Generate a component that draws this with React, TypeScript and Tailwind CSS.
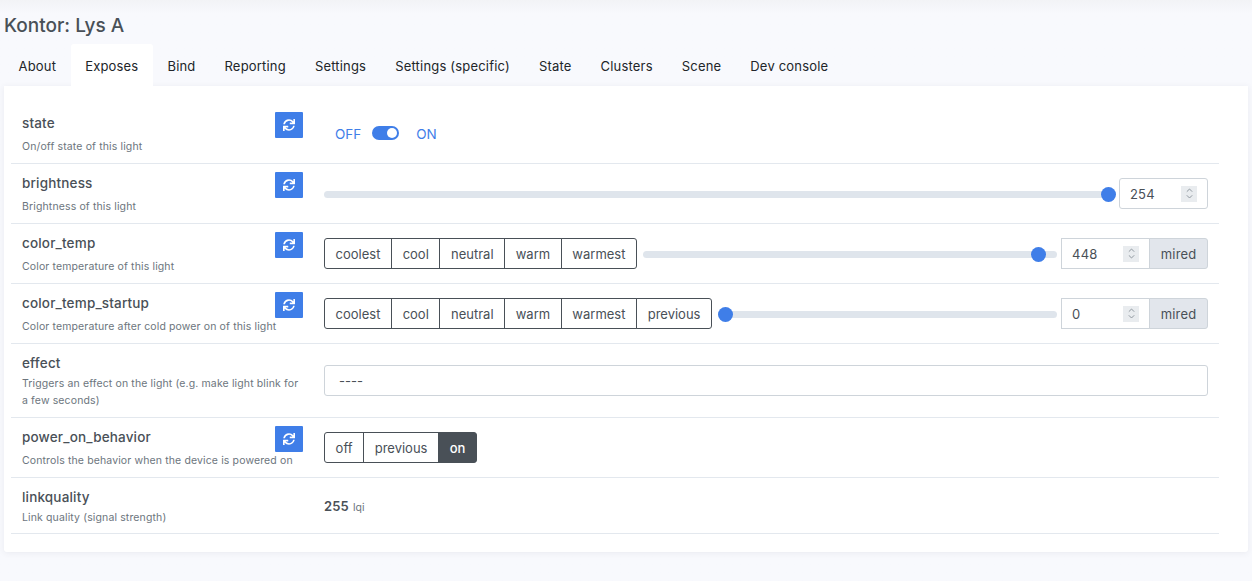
import type { ReactNode } from "react";
import { FaSync } from "react-icons/fa";

const tabs = ["About", "Exposes", "Bind", "Reporting", "Settings", "Settings (specific)", "State", "Clusters", "Scene", "Dev console"];

const RefreshButton = () => (
  <button className="w-[28px] h-[26px] shrink-0 rounded-[1px] bg-[#3f7ee8] text-white flex items-center justify-center">
    <FaSync className="w-[12px] h-[12px]" />
  </button>
);

// left column with the name, description and optional refresh button
const Label = ({ name, desc, descTop = "mt-[5px]", refresh = true }: { name: string; desc: string; descTop?: string; refresh?: boolean }) => (
  <div className="w-[302px] shrink-0 flex justify-between pl-[11px] pr-[21px]">
    <div className="w-[282px] shrink-0">
      <div className="text-[13.5px] tracking-[0.17px] leading-[20px] font-medium text-[#495057] h-[20px] -mt-[1px]">{name}</div>
      <div className={"text-[10.5px] tracking-[0.13px] leading-[17px] text-[#6c757d] " + descTop}>{desc}</div>
    </div>
    {refresh && <div className="-ml-[29px] -mt-[2px]"><RefreshButton /></div>}
  </div>
);

const Slider = ({ percent, className }: { percent: number; className: string }) => (
  <div className={"relative shrink-0 h-[7px] mt-[1px] rounded-full bg-[#dfe5ec] " + className}>
    <div
      className="absolute top-[-4px] w-[15px] h-[15px] rounded-full bg-[#3f7ee8] -ml-[7px]"
      style={{ left: percent + "%" }}
    />
  </div>
);

const Spinner = () => (
  <div className="w-[16px] h-[16px] bg-[#e9ecef] flex flex-col items-center justify-center">
    <svg viewBox="0 0 10 14" className="w-[9px] h-[13px]" fill="none" stroke="#868e96" strokeWidth="1">
      <path d="M2 5 L5 2 L8 5" />
      <path d="M2 9 L5 12 L8 9" />
    </svg>
  </div>
);

const NumberBox = ({ value, className }: { value: string; className: string }) => (
  <div className={"h-[31px] shrink-0 bg-white border border-[#ced4da] flex items-center justify-between pl-[10px] pr-[10px] text-[13px] tracking-[0.15px] text-[#495057] " + className}>
    <span className="pt-[2px]">{value}</span>
    <Spinner />
  </div>
);

const Presets = ({ items, active }: { items: string[]; active?: string }) => (
  <div className="flex h-[31px] shrink-0">
    {items.map((item, i) => (
      <div
        key={item}
        className={
          "h-full px-[10.6px] pt-[2px] flex items-center text-[13px] border border-[#495057] " +
          (i > 0 ? "-ml-px " : "") +
          (i === 0 ? "rounded-l-[3px] " : "") +
          (i === items.length - 1 ? "rounded-r-[3px] " : "") +
          (item === active ? "bg-[#495057] text-white font-medium" : "bg-white text-[#495057]")
        }
      >
        {item}
      </div>
    ))}
  </div>
);

const Unit = () => (
  <div className="h-[31px] w-[59px] shrink-0 -ml-px pt-[2px] rounded-r-[3px] border border-[#ced4da] bg-[#e2e6ec] flex items-center justify-center text-[13px] tracking-[0.15px] text-[#495057]">
    mired
  </div>
);

const Row = ({ height, children }: { height: string; children: ReactNode }) => (
  <div className={"flex border-b border-[#e3e8ee] pt-[10px] " + height}>{children}</div>
);

const temps = ["coolest", "cool", "neutral", "warm", "warmest"];

export default function App() {
  return (
    <div
      className="h-[581px] w-[1252px] overflow-hidden bg-gradient-to-b from-[#f2f3f6] to-[#f8f9fd] to-[14px] text-[#495057]"
      style={{ fontFamily: "Inter, 'Noto Sans', sans-serif" }}
    >
      <h1 className="pl-[4px] pt-[14px] text-[19px] leading-[24px] h-[44px] font-medium text-[#495057]">Kontor: Lys A</h1>
      <div className="flex pl-[4px] h-[42px]">
        {tabs.map((t) => (
          <div
            key={t}
            className={
              "px-[14.5px] pt-[4px] flex items-center text-[13px] tracking-[0.19px] text-[#212529] rounded-t-[3px] " +
              (t === "Exposes" ? "bg-white" : "")
            }
          >
            {t}
          </div>
        ))}
      </div>
      <div className="mx-[4px] h-[466px] bg-white rounded-b-[3px] shadow-[0_1px_6px_rgba(60,70,90,0.08)] pl-[7px] pr-[29px] pt-[18px]">
        <Row height="h-[60px]">
          <Label name="state" desc="On/off state of this light" />
          <div className="flex items-center h-[40px] pl-[22px] gap-[11px] text-[13.5px] text-[#3f7ee8] self-start">
            <span className="mt-[1px]">OFF</span>
            <div className="w-[27px] h-[14px] rounded-full bg-[#3f7ee8] relative -mt-[2px] mr-[6px]">
              <div className="absolute right-[2px] top-[2px] w-[10px] h-[10px] rounded-full bg-white" />
            </div>
            <span className="mt-[1px]">ON</span>
          </div>
        </Row>
        <Row height="h-[60px]">
          <Label name="brightness" desc="Brightness of this light" />
          <div className="flex items-center h-[31px] w-[884px] ml-[11px] mt-[4px] gap-[4px]">
            <Slider percent={99.1} className="w-[791px]" />
            <NumberBox value="254" className="w-[89px] rounded-[3px]" />
          </div>
        </Row>
        <Row height="h-[60px]">
          <Label name="color_temp" desc="Color temperature of this light" />
          <div className="flex items-center h-[31px] w-[884px] ml-[11px] mt-[4px]">
            <Presets items={temps} />
            <Slider percent={95.4} className="w-[414px] ml-[6px] mr-[4px]" />
            <NumberBox value="448" className="w-[89px]" />
            <Unit />
          </div>
        </Row>
        <Row height="h-[60px]">
          <Label name="color_temp_startup" desc="Color temperature after cold power on of this light" />
          <div className="flex items-center h-[31px] w-[884px] ml-[11px] mt-[4px]">
            <Presets items={[...temps, "previous"]} />
            <Slider percent={2.2} className="w-[339px] ml-[6px] mr-[4px]" />
            <NumberBox value="0" className="w-[89px]" />
            <Unit />
          </div>
        </Row>
        <Row height="h-[74px]">
          <Label name="effect" desc="Triggers an effect on the light (e.g. make light blink for a few seconds)" descTop="mt-[2px]" refresh={false} />
          <div className="h-[31px] w-[884px] ml-[11px] mt-[11px] pt-[2px] rounded-[3px] border border-[#ced4da] bg-white flex items-center pl-[14px] text-[13px] text-[#495057]">
            ----
          </div>
        </Row>
        <Row height="h-[60px]">
          <Label name="power_on_behavior" desc="Controls the behavior when the device is powered on" />
          <div className="ml-[11px] mt-[4px]">
            <Presets items={["off", "previous", "on"]} active="on" />
          </div>
        </Row>
        <Row height="h-[56px]">
          <Label name="linkquality" desc="Link quality (signal strength)" descTop="mt-[2px]" refresh={false} />
          <div className="ml-[11px] mt-[9px] h-[20px] flex items-baseline gap-[4px] text-[#495057]">
            <span className="text-[13px] font-semibold tracking-[0.15px]">255</span>
            <span className="text-[10.5px] text-[#6c757d]">lqi</span>
          </div>
        </Row>
      </div>
    </div>
  );
}
